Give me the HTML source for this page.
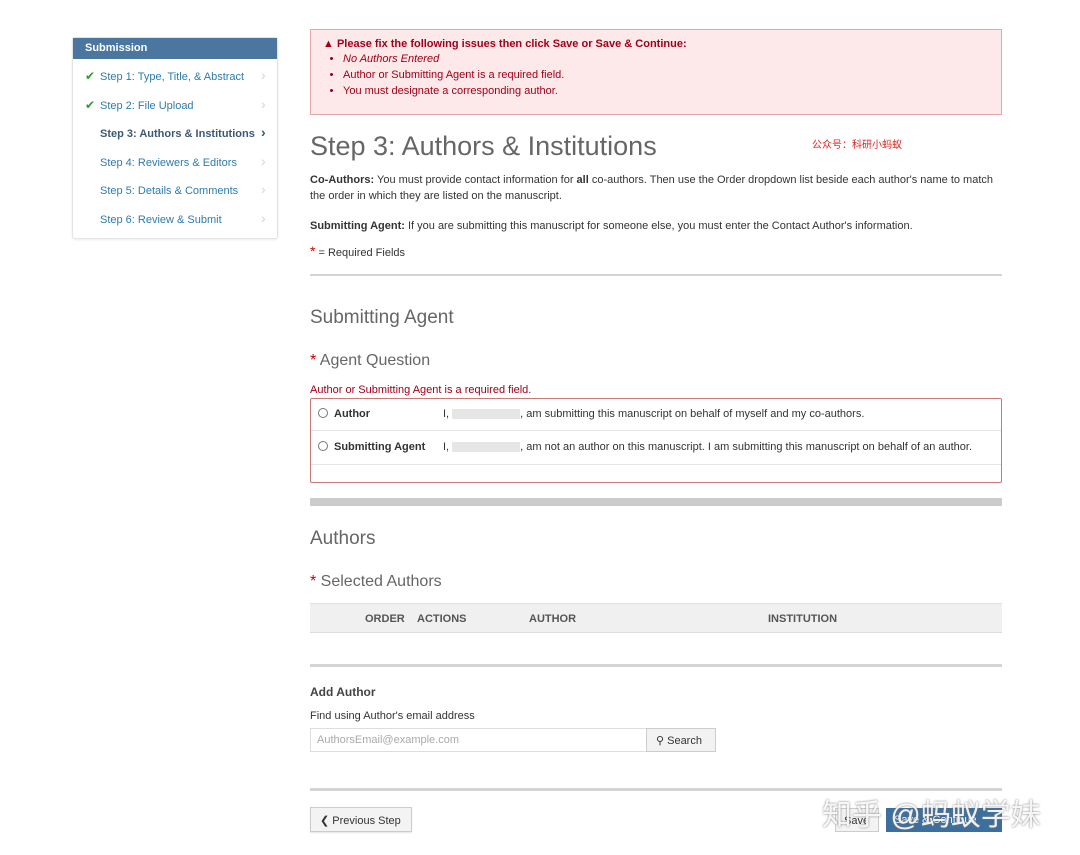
<!DOCTYPE html>
<html><head><meta charset="utf-8"><style>
*{box-sizing:border-box;margin:0;padding:0}
body{width:1080px;height:855px;background:#fff;font-family:"Liberation Sans",Arial,sans-serif;font-size:11px;color:#333;position:relative;overflow:hidden}
.abs{position:absolute;white-space:nowrap}
.nav{left:72px;top:37px;width:206px;height:202px;border:1px solid #e3e3e3;border-radius:3px;box-shadow:0 1px 2px rgba(0,0,0,.08)}
.nav .hd{background:#4a76a0;color:#fff;font-weight:bold;height:21px;line-height:21px;padding-left:12px;margin:0 0 0 0}
.nav .it{position:absolute;left:27px;color:#2e7bad;font-size:11px}
.nav .ck{position:absolute;left:12px;color:#2a9d2a;font-size:12px}
.nav .ar{position:absolute;left:188px;color:#c7d7e3;font-size:14px}
.err{left:310px;top:29px;width:692px;height:86px;background:#fde9e9;border:1px solid #e4a8a8;color:#a0001a;padding:8px 12px}
.err li{margin-left:20px;line-height:16px}
h1{font-weight:normal;font-size:27px;color:#666;font-family:"Liberation Sans",sans-serif}
.t{color:#666}
.red{color:#c00}
hr.g{position:absolute;left:310px;width:692px;border:0;height:3px;background:#d4d4d4}
</style></head><body>
<div class="abs nav"><div class="hd">Submission</div>
<span class="ck" style="top:31px">✔</span><span class="it" style="top:33px">Step 1: Type, Title, &amp; Abstract</span><span class="ar" style="top:29px">›</span>
<span class="ck" style="top:60px">✔</span><span class="it" style="top:62px">Step 2: File Upload</span><span class="ar" style="top:58px">›</span>
<span class="it" style="top:90px;color:#3d5874;font-weight:bold">Step 3: Authors &amp; Institutions</span><span class="ar" style="top:86px;color:#3d5874;font-weight:bold">›</span>
<span class="it" style="top:119px">Step 4: Reviewers &amp; Editors</span><span class="ar" style="top:115px">›</span>
<span class="it" style="top:147px">Step 5: Details &amp; Comments</span><span class="ar" style="top:143px">›</span>
<span class="it" style="top:176px">Step 6: Review &amp; Submit</span><span class="ar" style="top:172px">›</span>
</div>
<div class="abs err"><div style="font-weight:bold">▲ Please fix the following issues then click Save or Save &amp; Continue:</div>
<ul style="margin-top:1px"><li><i>No Authors Entered</i></li><li>Author or Submitting Agent is a required field.</li><li>You must designate a corresponding author.</li></ul></div>
<h1 class="abs" style="left:310px;top:131px">Step 3: Authors &amp; Institutions</h1>
<div class="abs" style="left:812px;top:136px;color:#d22;font-family:'Liberation Sans','Noto Sans CJK SC',sans-serif;font-size:10px">公众号：科研小蚂蚁</div>
<div class="abs" style="left:310px;top:172px;width:695px;line-height:16px;white-space:normal"><b>Co-Authors:</b> You must provide contact information for <b>all</b> co-authors. Then use the Order dropdown list beside each author's name to match the order in which they are listed on the manuscript.</div>
<div class="abs" style="left:310px;top:220px"><b>Submitting Agent:</b> If you are submitting this manuscript for someone else, you must enter the Contact Author's information.</div>
<div class="abs" style="left:310px;top:243px"><span class="red" style="font-size:14px">*</span> = Required Fields</div>
<hr class="g" style="top:274px;height:2px">
<div class="abs t" style="left:310px;top:307px;font-size:19px">Submitting Agent</div>
<div class="abs t" style="left:310px;top:352px;font-size:16px"><span class="red">*</span> Agent Question</div>
<div class="abs" style="left:310px;top:384px;color:#a0001a">Author or Submitting Agent is a required field.</div>
<div class="abs" style="left:310px;top:398px;width:692px;height:85px;border:1px solid #c77;border-radius:2px">
<div style="height:32px;border-bottom:1px solid #e5e5e5;position:relative"><span style="position:absolute;left:7px;top:9px;width:10px;height:10px;border:1px solid #777;border-radius:50%"></span><b style="position:absolute;left:23px;top:9px">Author</b><span style="position:absolute;left:132px;top:9px">I, <span style="display:inline-block;width:68px;height:10px;background:#e6e6e6;vertical-align:middle"></span>, am submitting this manuscript on behalf of myself and my co-authors.</span></div>
<div style="height:34px;border-bottom:1px solid #e5e5e5;position:relative"><span style="position:absolute;left:7px;top:10px;width:10px;height:10px;border:1px solid #777;border-radius:50%"></span><b style="position:absolute;left:23px;top:10px">Submitting Agent</b><span style="position:absolute;left:132px;top:10px">I, <span style="display:inline-block;width:68px;height:10px;background:#e6e6e6;vertical-align:middle"></span>, am not an author on this manuscript. I am submitting this manuscript on behalf of an author.</span></div>
</div>
<hr class="g" style="top:498px;height:8px;background:#ccc">
<div class="abs t" style="left:310px;top:528px;font-size:19px">Authors</div>
<div class="abs t" style="left:310px;top:573px;font-size:16px"><span class="red">*</span> Selected Authors</div>
<div class="abs" style="left:310px;top:603px;width:692px;height:30px;background:#f0f0f0;border-top:1px solid #e0e0e0;border-bottom:1px solid #ddd;font-weight:bold;color:#555">
<span class="abs" style="left:55px;top:9px">ORDER</span><span class="abs" style="left:107px;top:9px">ACTIONS</span><span class="abs" style="left:219px;top:9px">AUTHOR</span><span class="abs" style="left:458px;top:9px">INSTITUTION</span></div>
<hr class="g" style="top:664px;height:3px">
<div class="abs" style="left:310px;top:685px;font-size:12px;font-weight:bold;color:#444">Add Author</div>
<div class="abs" style="left:310px;top:710px">Find using Author's email address</div>
<div class="abs" style="left:310px;top:728px;width:337px;height:24px;border:1px solid #ddd;color:#aaa;padding:5px 6px">AuthorsEmail@example.com</div>
<div class="abs" style="left:646px;top:728px;width:70px;height:24px;border:1px solid #ccc;background:#f2f2f2;padding:5px 9px">&#9906; Search</div>
<hr class="g" style="top:788px;height:3px">
<div class="abs" style="left:310px;top:807px;width:102px;height:25px;border:1px solid #ccc;background:#f3f3f3;padding:6px 9px;box-shadow:0 1px 1px rgba(0,0,0,.1)">❮ Previous Step</div>
<div class="abs" style="left:835px;top:808px;width:44px;height:24px;border:1px solid #ccc;background:#f3f3f3;padding:6px 8px">Save</div>
<div class="abs" style="left:886px;top:808px;width:116px;height:24px;background:#3d6f9e;color:#fff;padding:6px 8px">Save &amp; Continue</div>
<div class="abs" style="left:822px;top:790px;font-size:30px;color:rgba(255,255,255,.9);text-shadow:0 0 2px #777;font-family:'Liberation Sans','Noto Sans CJK SC',sans-serif">知乎 @蚂蚁学妹</div>
</body></html>
